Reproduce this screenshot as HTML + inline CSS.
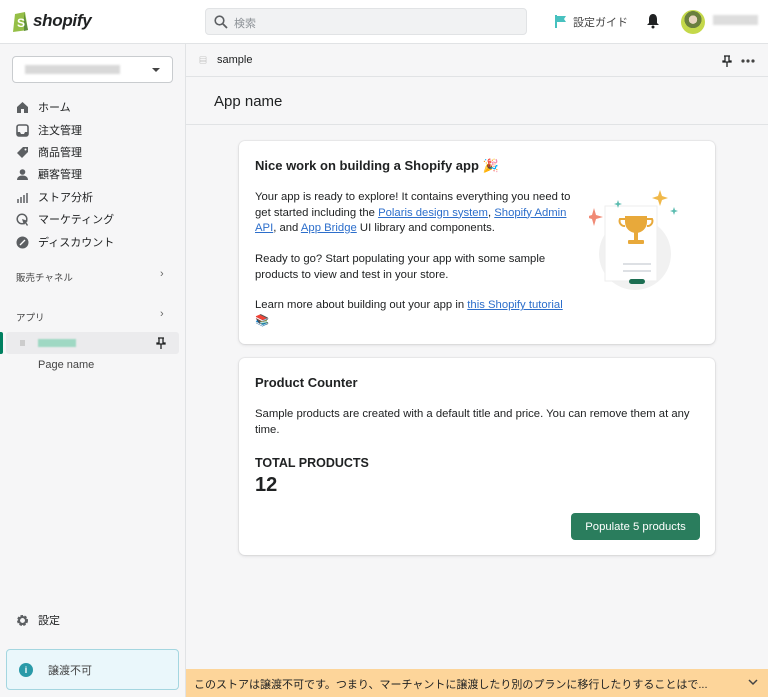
<!DOCTYPE html>
<html><head><meta charset="utf-8"><style>
*{box-sizing:border-box;margin:0;padding:0}
body{width:768px;height:697px;overflow:hidden;background:#f6f6f7;font-family:"Liberation Sans","Noto Sans CJK JP",sans-serif;color:#202223;font-size:11px;position:relative}
.top{position:absolute;left:0;top:0;width:768px;height:44px;background:#fff;border-bottom:1px solid #e1e3e5}
.side{position:absolute;left:0;top:44px;width:186px;height:653px;background:#f6f6f7;border-right:1px solid #e1e3e5}
.nav{position:absolute;left:16px;display:flex;align-items:center;font-size:11px;color:#202223}
.nav svg{width:13px;height:13px;margin-right:9px}
a{color:#2c6ecb;text-decoration:underline}
.card{position:absolute;left:239px;width:476px;background:#fff;border-radius:6px;box-shadow:0 0 0 1px rgba(63,63,68,.05),0 1px 3px rgba(63,63,68,.15)}
.card h2{font-size:13px;font-weight:600}
.card p{line-height:15.5px;color:#202223;font-size:11.3px;white-space:nowrap}
</style></head><body>
<div class="top">
 <svg style="position:absolute;left:12px;top:10px" width="18" height="22" viewBox="0 0 18 22"><path d="M3 4 L13 2 L16 20 L1 22 Z" fill="#95bf47"/><path d="M12 2 L16 20 L12 21 Z" fill="#5e8e3e"/><text x="5" y="17" fill="#fff" font-size="12" font-weight="bold" font-family="Liberation Sans">S</text></svg>
 <div style="position:absolute;left:33px;top:11px;font-size:17px;font-weight:bold;font-style:italic;letter-spacing:-.3px">shopify</div>
 <div style="position:absolute;left:205px;top:8px;width:322px;height:27px;background:#f1f2f3;border:1px solid #e1e3e5;border-radius:4px">
  <svg style="position:absolute;left:8px;top:6px" width="14" height="14" viewBox="0 0 14 14"><circle cx="5.5" cy="5.5" r="4.3" fill="none" stroke="#5c5f62" stroke-width="1.6"/><path d="M9 9l4 4" stroke="#5c5f62" stroke-width="1.8"/></svg>
  <span style="position:absolute;left:28px;top:6px;color:#8c9196;font-size:11px">検索</span></div>
 <svg style="position:absolute;left:555px;top:15px" width="12" height="13" viewBox="0 0 12 13"><path d="M1 0v13" stroke="#47c1bf" stroke-width="2"/><path d="M2 1h9l-2 3 2 3H2z" fill="#47c1bf"/></svg>
 <span style="position:absolute;left:573px;top:14px;font-size:11px;color:#444">設定ガイド</span>
 <svg style="position:absolute;left:646px;top:13px" width="14" height="16" viewBox="0 0 14 16"><path d="M7 1C4 1 3 4 3 6v4l-2 2h12l-2-2V6c0-2-1-5-4-5z" fill="#202223"/><circle cx="7" cy="14" r="1.5" fill="#202223"/></svg>
 <div style="position:absolute;left:681px;top:10px;width:24px;height:24px;border-radius:50%;background:radial-gradient(circle at 50% 40%,#e8d5c0 0 22%,#6a7f3f 23% 45%,#c4d84a 46%)"></div>
 <div style="position:absolute;left:713px;top:15px;width:45px;height:10px;background:#ddd;filter:blur(1px)"></div>
</div>
<div class="side">
 <div style="position:absolute;left:12px;top:12px;width:161px;height:27px;background:#fff;border:1px solid #c9cccf;border-radius:4px">
  <div style="position:absolute;left:12px;top:8px;width:95px;height:9px;background:#d8d8d8;filter:blur(1px)"></div>
  <div style="position:absolute;right:12px;top:11px;border:4px solid transparent;border-top:4px solid #444;border-bottom:0"></div></div>
 <div class="nav" style="top:55px"><svg viewBox="0 0 13 13"><path d="M6.5 1L1 6v6h4V8h3v4h4V6z" fill="#5c5f62"/></svg>ホーム</div>
 <div class="nav" style="top:78px"><svg viewBox="0 0 13 13"><rect x="1" y="1" width="11" height="11" rx="2" fill="none" stroke="#5c5f62" stroke-width="1.6"/><path d="M1 8h3l1 2h3l1-2h3v4H1z" fill="#5c5f62"/></svg>注文管理</div>
 <div class="nav" style="top:100px"><svg viewBox="0 0 13 13"><path d="M7 1h5v5l-6 6-5-5z" fill="#5c5f62"/><circle cx="9.5" cy="3.5" r="1" fill="#fff"/></svg>商品管理</div>
 <div class="nav" style="top:122px"><svg viewBox="0 0 13 13"><circle cx="6.5" cy="4" r="2.8" fill="#5c5f62"/><path d="M1 12c0-3 2.5-4.5 5.5-4.5S12 9 12 12z" fill="#5c5f62"/></svg>顧客管理</div>
 <div class="nav" style="top:145px"><svg viewBox="0 0 13 13"><path d="M2 8v4M5 6v6M8 4v8M11 2v10" stroke="#5c5f62" stroke-width="1.5"/></svg>ストア分析</div>
 <div class="nav" style="top:167px"><svg viewBox="0 0 13 13"><circle cx="6" cy="6" r="4.8" fill="none" stroke="#5c5f62" stroke-width="1.5"/><path d="M6 6l6 2-2 1 2 3-1 1-2-3-1 2z" fill="#5c5f62"/></svg>マーケティング</div>
 <div class="nav" style="top:190px"><svg viewBox="0 0 13 13"><circle cx="6.5" cy="6.5" r="6" fill="#5c5f62"/><path d="M4 9l5-5" stroke="#fff" stroke-width="1.3"/></svg>ディスカウント</div>
 <div style="position:absolute;left:16px;top:226px;font-size:9.5px;color:#444">販売チャネル</div><div style="position:absolute;left:160px;top:224px;color:#666">›</div>
 <div style="position:absolute;left:16px;top:266px;font-size:9.5px;color:#444">アプリ</div><div style="position:absolute;left:160px;top:264px;color:#666">›</div>
 <div style="position:absolute;left:0;top:288px;width:3px;height:22px;background:#008060;border-radius:0 2px 2px 0"></div>
 <div style="position:absolute;left:6px;top:288px;width:173px;height:22px;background:#ebebed;border-radius:3px">
  <div style="position:absolute;left:14px;top:8px;width:5px;height:6px;background:#ccc"></div>
  <div style="position:absolute;left:32px;top:7px;width:38px;height:8px;background:#9fd8c3;filter:blur(.8px)"></div>
  <svg style="position:absolute;left:150px;top:5px" width="10" height="12" viewBox="0 0 10 12"><path d="M2 1h6M3 1v5H1v1h8V6H7V1M5 7v5" stroke="#202223" stroke-width="1.3" fill="none"/></svg></div>
 <div style="position:absolute;left:38px;top:315px;font-size:11px;color:#444">Page name</div>
 <div class="nav" style="top:568px"><svg viewBox="0 0 13 13"><circle cx="6.5" cy="6.5" r="4" fill="none" stroke="#5c5f62" stroke-width="3" stroke-dasharray="2.2 1.2"/><circle cx="6.5" cy="6.5" r="3.5" fill="none" stroke="#5c5f62" stroke-width="2"/></svg>設定</div>
 <div style="position:absolute;left:6px;top:605px;width:173px;height:41px;background:#eaf7fb;border:1px solid #a4d6e0;border-radius:4px">
  <div style="position:absolute;left:12px;top:13px;width:14px;height:14px;border-radius:50%;background:#2a9aa8;color:#fff;font-size:9px;font-weight:bold;text-align:center;line-height:14px">i</div>
  <span style="position:absolute;left:41px;top:12px;font-size:11px;color:#444">譲渡不可</span></div>
</div>
<div style="position:absolute;left:186px;top:44px;width:582px;height:33px;background:#f6f6f7;border-bottom:1px solid #e1e3e5">
 <span style="position:absolute;left:13px;top:11px;font-size:8px;color:#999">▤</span>
 <span style="position:absolute;left:31px;top:10px;font-size:11px">sample</span>
 <svg style="position:absolute;left:536px;top:11px" width="10" height="12" viewBox="0 0 10 12"><path d="M2 1h6M3 1v5H1v1h8V6H7V1M5 7v5" stroke="#202223" stroke-width="1.3" fill="none"/></svg>
 <svg style="position:absolute;left:555px;top:15px" width="14" height="4" viewBox="0 0 14 4"><circle cx="2" cy="2" r="1.6" fill="#444"/><circle cx="7" cy="2" r="1.6" fill="#444"/><circle cx="12" cy="2" r="1.6" fill="#444"/></svg></div>
<div style="position:absolute;left:186px;top:77px;width:582px;height:48px;background:#f6f6f7;border-bottom:1px solid #e1e3e5">
 <span style="position:absolute;left:28px;top:16px;font-size:15px">App name</span></div>
<div class="card" style="top:141px;height:203px">
 <h2 style="position:absolute;left:16px;top:17px">Nice work on building a Shopify app 🎉</h2>
 <p style="position:absolute;left:16px;top:49px">Your app is ready to explore! It contains everything you need to<br>get started including the <a>Polaris design system</a>, <a>Shopify Admin</a><br><a>API</a>, and <a>App Bridge</a> UI library and components.</p>
 <p style="position:absolute;left:16px;top:111px">Ready to go? Start populating your app with some sample<br>products to view and test in your store.</p>
 <p style="position:absolute;left:16px;top:157px">Learn more about building out your app in <a>this Shopify tutorial</a><br>📚</p>
 <svg style="position:absolute;left:350px;top:45px" width="100" height="105" viewBox="0 0 100 105">
  <circle cx="46" cy="68" r="36" fill="#f1f1f1"/>
  <rect x="16" y="20" width="52" height="75" fill="#fff" stroke="#eee"/>
  <path d="M36 30h22v6a11 11 0 01-22 0z" fill="#e8a93a"/><path d="M36 33h-5a5 5 0 005 7M58 33h5a5 5 0 01-5 7" fill="none" stroke="#e8a93a" stroke-width="2"/>
  <rect x="45" y="46" width="4" height="8" fill="#e8a93a"/><rect x="39" y="54" width="16" height="4" rx="1" fill="#e8a93a"/>
  <rect x="34" y="77" width="28" height="2" fill="#dde0e4"/><rect x="34" y="84" width="28" height="2" fill="#dde0e4"/>
  <rect x="40" y="93" width="16" height="5" rx="2.5" fill="#1c6e52"/>
  <path d="M5 22l2 7 7 2-7 2-2 7-2-7-7-2 7-2z" fill="#f08a75"/>
  <path d="M71 4l2 6 6 2-6 2-2 6-2-6-6-2 6-2z" fill="#f0b849"/>
  <path d="M29 14l1 3 3 1-3 1-1 3-1-3-3-1 3-1z" fill="#5cbcb0"/><path d="M85 21l1 3 3 1-3 1-1 3-1-3-3-1 3-1z" fill="#5cbcb0"/>
 </svg>
</div>
<div class="card" style="top:358px;height:197px">
 <h2 style="position:absolute;left:16px;top:17px">Product Counter</h2>
 <p style="position:absolute;left:16px;top:49px">Sample products are created with a default title and price. You can remove them at any<br>time.</p>
 <div style="position:absolute;left:16px;top:98px;font-size:12.5px;font-weight:600">TOTAL PRODUCTS</div>
 <div style="position:absolute;left:16px;top:116px;font-size:20px;font-weight:600">12</div>
 <div style="position:absolute;left:332px;top:155px;width:129px;height:27px;background:#2a7d5d;border-radius:4px;color:#fff;font-size:11.3px;text-align:center;line-height:28px">Populate 5 products</div>
</div>
<div style="position:absolute;left:186px;top:669px;width:582px;height:28px;background:#fdd59a">
 <span style="position:absolute;left:8px;top:7px;font-size:11px;color:#202223;white-space:nowrap">このストアは譲渡不可です。つまり、マーチャントに譲渡したり別のプランに移行したりすることはで...</span>
 <svg style="position:absolute;left:562px;top:10px" width="10" height="7" viewBox="0 0 10 7"><path d="M1 1l4 4 4-4" fill="none" stroke="#444" stroke-width="1.5"/></svg></div>
</body></html>
